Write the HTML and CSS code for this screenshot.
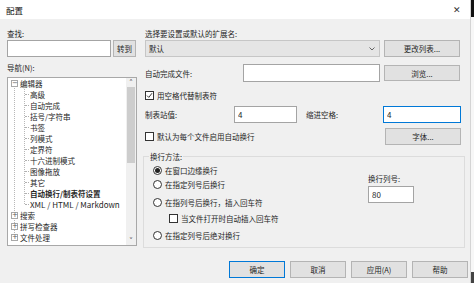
FILE: index.html
```html
<!DOCTYPE html>
<html lang="zh-CN">
<head>
  <meta charset="UTF-8">
  <title>配置</title>
  <link rel="stylesheet" href="styles.css">
</head>
<body>
  <div class="window">
    <div class="titlebar">
      <span class="title">配置</span>
      <span class="close">&#x2715;</span>
    </div>

    <div class="main">
      <!-- 左侧：查找 + 导航 -->
      <div class="left">
        <div class="label">查找:</div>
        <div class="find-row">
          <input type="text" class="field find-field">
          <button class="btn go-btn">转到</button>
        </div>
        <div class="label nav-label">导航(N):</div>
        <div class="tree">
          <div class="tree-list">
            <div class="node root"><span class="toggle">&minus;</span>编辑器</div>
            <div class="children">
              <div class="node leaf">高级</div>
              <div class="node leaf">自动完成</div>
              <div class="node leaf">括号/字符串</div>
              <div class="node leaf">书签</div>
              <div class="node leaf">列模式</div>
              <div class="node leaf">定界符</div>
              <div class="node leaf">十六进制模式</div>
              <div class="node leaf">图像拖放</div>
              <div class="node leaf">其它</div>
              <div class="node leaf selected">自动换行/制表符设置</div>
              <div class="node leaf latin">XML / HTML / Markdown</div>
            </div>
            <div class="node root"><span class="toggle">+</span>搜索</div>
            <div class="node root"><span class="toggle">+</span>拼写检查器</div>
            <div class="node root"><span class="toggle">+</span>文件处理</div>
            <div class="node root"><span class="toggle">+</span>文件关联</div>
          </div>
          <div class="scrollbar">
            <span class="arrow">&#x2C4;</span>
            <span class="thumb"></span>
            <span class="track"></span>
            <span class="arrow">&#x2C5;</span>
          </div>
        </div>
      </div>

      <!-- 右侧：设置 -->
      <div class="right">
        <div class="label">选择要设置或默认的扩展名:</div>
        <div class="row">
          <div class="select">
            <span>默认</span>
            <svg width="6" height="4" viewBox="0 0 6 4"><path d="M0.5 0.5 L3 3 L5.5 0.5" fill="none" stroke="#555" stroke-width="0.9"/></svg>
          </div>
          <button class="btn wide-btn">更改列表...</button>
        </div>

        <div class="row row-auto">
          <span class="row-label auto-label">自动完成文件:</span>
          <input type="text" class="field auto-field">
          <button class="btn wide-btn short">浏览...</button>
        </div>

        <label class="check-row">
          <span class="check checked">
            <svg width="7" height="7" viewBox="0 0 7 7"><path d="M1 3.6 L2.8 5.4 L6 1.2" fill="none" stroke="#222" stroke-width="0.9"/></svg>
          </span>
          用空格代替制表符
        </label>

        <div class="row row-tabs">
          <span class="row-label tab-label">制表站值:</span>
          <input type="text" class="field tab-field" value="4">
          <span class="row-label indent-label">缩进空格:</span>
          <input type="text" class="field indent-field" value="4">
        </div>

        <div class="row row-font">
          <label class="check-row inline">
            <span class="check"></span>
            默认为每个文件启用自动换行
          </label>
          <button class="btn wide-btn font-btn">字体...</button>
        </div>

        <fieldset class="group">
          <legend>换行方法:</legend>
          <div class="group-body">
            <div class="radios">
              <div class="radio-row r1"><span class="radio on"></span>在窗口边缘换行</div>
              <div class="radio-row r2"><span class="radio"></span>在指定列号后换行</div>
              <div class="radio-row r3"><span class="radio"></span>在指列号后换行，插入回车符</div>
              <div class="radio-row r4 sub"><span class="check"></span>当文件打开时自动插入回车符</div>
              <div class="radio-row r5"><span class="radio"></span>在指定列号后绝对换行</div>
            </div>
            <div class="col-box">
              <div class="col-label">换行列号:</div>
              <input type="text" class="field col-field" value="80">
            </div>
          </div>
        </fieldset>
      </div>
    </div>

    <div class="footer">
      <button class="btn foot-btn default">确定</button>
      <button class="btn foot-btn">取消</button>
      <button class="btn foot-btn">应用(A)</button>
      <button class="btn foot-btn">帮助</button>
    </div>
  </div>
  <div class="edge"></div>
</body>
</html>
```

FILE: styles.css
```css
* {
  box-sizing: border-box;
}
body {
  margin: 0;
  width: 474px;
  height: 283px;
  overflow: hidden;
  display: flex;
  background: #f7f7f7;
  font-family: "Noto Sans CJK SC", "Noto Sans", sans-serif;
  font-size: 7.5px;
  color: #262626;
}
.window {
  width: 471px;
  height: 283px;
  background: #f0f0f0;
  border-right: 1px solid #d4d4d4;
}
.edge {
  width: 3px;
  height: 283px;
  background: linear-gradient(#111 0, #111 17px, #f7f7f7 17px, #f7f7f7 272px, #444 272px);
}
.titlebar {
  height: 19px;
  background: #fff;
  display: flex;
  align-items: center;
  justify-content: space-between;
  padding: 0 9px 0 6px;
}
.title {
  font-size: 8.5px;
  color: #111;
}
.close {
  font-size: 9px;
  color: #333;
}

.main {
  display: flex;
  padding: 8px 0 0 7px;
}
.left {
  width: 130px;
}
.right {
  width: 316px;
  margin-left: 8px;
}
.label {
  height: 13px;
  line-height: 13px;
}
.nav-label {
  margin-top: 4px;
}

/* 输入框与按钮 */
.field {
  height: 17px;
  margin: 0;
  border: 1px solid #a4a4a4;
  background: #fff;
  padding: 0 0 0 3px;
  font-family: inherit;
  font-size: 8px;
  color: #262626;
  outline: none;
}
.btn {
  height: 17px;
  margin: 0;
  padding: 0;
  background: #e1e1e1;
  border: 1px solid #b4b4b4;
  font-family: inherit;
  font-size: inherit;
  color: #262626;
}
.find-row {
  display: flex;
  height: 17px;
}
.find-field {
  width: 104px;
}
.go-btn {
  width: 23px;
  margin-left: 2px;
}

/* 导航树 */
.tree {
  margin-top: 3px;
  height: 169px;
  border: 1px solid #a8a8a8;
  background: #fff;
  display: flex;
  overflow: hidden;
}
.tree-list {
  flex: 1;
  padding: 0 0 0 3px;
  overflow: hidden;
  background: repeating-linear-gradient(#b8b8b8 0 1px, transparent 1px 2px) 6px 10px / 1px 150px no-repeat;
}
.node {
  height: 11px;
  line-height: 11px;
  white-space: nowrap;
  position: relative;
}
.root {
  display: flex;
  align-items: center;
}
.toggle {
  width: 7px;
  height: 7px;
  border: 1px solid #a8a8a8;
  background: #fff;
  margin-right: 2px;
  font-size: 7px;
  line-height: 5px;
  text-align: center;
  color: #555;
  font-family: "DejaVu Sans", sans-serif;
}
.children {
  margin-left: 13px;
  background: repeating-linear-gradient(#b8b8b8 0 1px, transparent 1px 2px) 0 0 / 1px 116px no-repeat;
}
.leaf {
  padding-left: 6px;
}
.leaf::before {
  content: "";
  position: absolute;
  left: 1px;
  top: 5px;
  width: 4px;
  border-top: 1px dotted #b0b0b0;
}
.latin {
  font-size: 8px;
}
.selected {
  font-weight: bold;
}
.scrollbar {
  width: 10px;
  background: #f0f0f0;
  display: flex;
  flex-direction: column;
  align-items: center;
}
.arrow {
  height: 9px;
  line-height: 11px;
  font-size: 8px;
  color: #606060;
  font-family: "DejaVu Sans", sans-serif;
}
.thumb {
  width: 8px;
  height: 76px;
  background: #cdcdcd;
}
.track {
  flex: 1;
}

/* 右侧设置 */
.row {
  display: flex;
  align-items: center;
}
.select {
  width: 235px;
  height: 17px;
  background: #e5e5e5;
  border: 1px solid #c6c6c6;
  display: flex;
  align-items: center;
  justify-content: space-between;
  padding: 0 4px 0 3px;
}
.wide-btn {
  width: 76px;
  margin-left: 4px;
}
.row-auto {
  margin-top: 7px;
  height: 18px;
}
.row-label {
  flex: none;
}
.auto-label {
  width: 98px;
}
.auto-field {
  width: 137px;
  height: 18px;
}
.short {
  height: 16px;
}
.check-row {
  display: flex;
  align-items: center;
  height: 12px;
  margin-top: 7px;
}
.check-row.inline {
  margin-top: 0;
}
.check {
  width: 9px;
  height: 9px;
  border: 1px solid #333;
  background: #fff;
  margin-right: 3px;
  display: flex;
  align-items: center;
  justify-content: center;
}
.row-tabs {
  margin-top: 5px;
  height: 17px;
}
.tab-label {
  width: 89px;
}
.tab-field {
  width: 63px;
}
.indent-label {
  width: 77px;
  margin-left: 9px;
}
.indent-field {
  width: 78px;
  border-color: #0078d7;
}
.row-font {
  margin-top: 5px;
  height: 17px;
}
.font-btn {
  margin-left: auto;
}

/* 换行方法 */
.group {
  margin: 6px -4px 0 -2px;
  padding: 0 0 0 5px;
  height: 97px;
  border: 1px solid #dcdcdc;
}
.group legend {
  padding: 0 1px;
  line-height: 11px;
}
.group-body {
  display: flex;
}
.radios {
  width: 219px;
  flex: none;
}
.radio-row {
  display: flex;
  align-items: center;
  height: 14px;
  padding-left: 4px;
}
.r1 { margin-top: 1px; }
.r3 { margin-top: 4px; }
.r4 { margin-top: 2px; }
.r5 { margin-top: 3px; }
.sub {
  padding-left: 20px;
}
.radio {
  width: 9px;
  height: 9px;
  border: 1px solid #333;
  border-radius: 50%;
  background: #fff;
  margin-right: 3px;
  display: flex;
  align-items: center;
  justify-content: center;
}
.radio.on::after {
  content: "";
  width: 5px;
  height: 5px;
  border-radius: 50%;
  background: #222;
}
.col-box {
  padding-top: 11px;
}
.col-label {
  height: 12px;
  line-height: 12px;
}
.col-field {
  width: 46px;
  margin-top: 1px;
}

/* 底部按钮 */
.footer {
  display: flex;
  justify-content: flex-end;
  gap: 5px;
  padding-right: 2px;
  margin-top: 13px;
}
.foot-btn {
  width: 56px;
}
.foot-btn.default {
  border-color: #0078d7;
}
```
